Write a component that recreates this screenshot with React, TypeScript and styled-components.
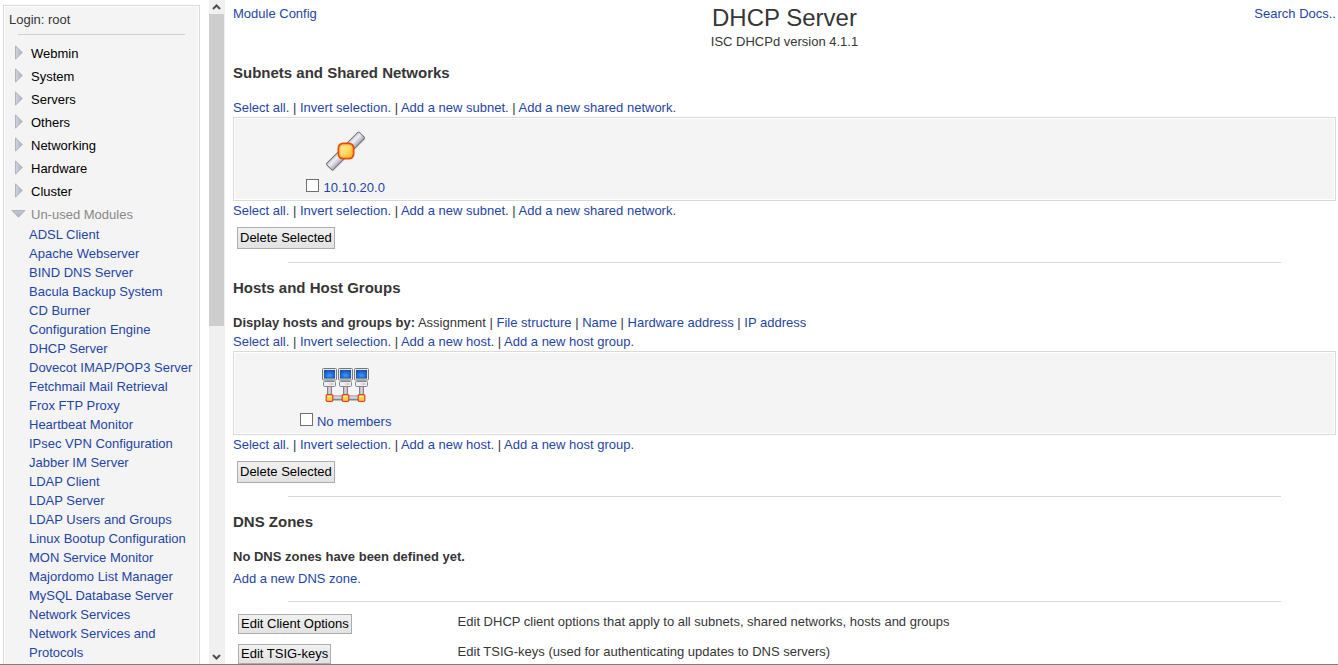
import React from "react";
import styled, { createGlobalStyle } from "styled-components";

const LINE = "#d9d9d9";
const PANEL = "#f4f4f4";
const LINK = "#1f45a5";
const TEXT = "#363636";

const GlobalStyle = createGlobalStyle`
  *, *::before, *::after { box-sizing: border-box; }
  body {
    margin: 0;
    background: #ffffff;
    color: ${TEXT};
    font-family: "Liberation Sans", Arial, sans-serif;
    font-size: 13px;
    line-height: 19px;
    overflow: hidden;
  }
`;

const Frames = styled.div`
  display: flex;
  height: 100vh;
  border-bottom: 1px solid #7d7d7d;
`;

const MenuFrame = styled.aside`
  display: flex;
  flex: none;
  width: 225px;
  overflow: hidden;
`;

const MenuScroll = styled.div`
  flex: 1;
  padding: 5px 9px 0 3px;
  overflow: hidden;
`;

const MenuBox = styled.nav`
  border: 1px solid ${LINE};
  background: ${PANEL};
  box-shadow: inset 0 0 0 1px #ffffff;
  padding: 4px 5px;
  min-height: 100%;
`;

const Login = styled.div``;

const MenuRule = styled.hr`
  border: 0;
  height: 1px;
  margin: 5px 9px 7px 9px;
  background: #d0d0d0;
`;

const Category = styled.button<{ $open?: boolean }>`
  display: flex;
  align-items: center;
  width: 100%;
  height: 23px;
  padding: 0;
  border: 0;
  background: none;
  font: inherit;
  text-align: left;
  color: ${(p) => (p.$open ? "#888888" : "#000000")};
`;

const ArrowSlot = styled.span`
  display: flex;
  justify-content: center;
  flex: none;
  width: 22px;
  padding: 0 3px 2px 0;
`;

const ModuleList = styled.ul`
  list-style: none;
  margin: -1px 0 0;
  padding: 0 0 0 20px;
`;

const Link = styled.a`
  color: ${LINK};
  text-decoration: none;
`;

const Track = styled.div`
  display: flex;
  flex-direction: column;
  flex: none;
  width: 16px;
  background: #f0f0f0;
`;

const TrackArrow = styled.button`
  display: flex;
  align-items: center;
  justify-content: center;
  height: 14px;
  padding: 0 1px 0 0;
  border: 0;
  background: none;
`;

const TrackRun = styled.div`
  flex: 1;
  padding-right: 1px;
`;

const Thumb = styled.div`
  height: 49%;
  background: #cdcdcd;
`;

const Main = styled.main`
  flex: 1;
  min-width: 0;
  overflow: hidden;
  padding: 4px 2px 0 8px;
`;

const Header = styled.header`
  display: grid;
  grid-template-columns: 15fr 70fr 15fr;
  margin-bottom: 10px;
`;

const TitleBlock = styled.div`
  text-align: center;
`;

const Title = styled.h1`
  margin: 0;
  font-size: 24px;
  font-weight: 400;
  line-height: 28px;
`;

const HeaderRight = styled.div`
  text-align: right;
`;

const Heading = styled.h2`
  margin: 0 0 13px;
  font-size: 15px;
  font-weight: 700;
  line-height: 24px;
`;

const Row = styled.div<{ $gap?: boolean }>`
  margin-top: ${(p) => (p.$gap ? "3px" : "0")};
  white-space: nowrap;
`;

const Panel = styled.div`
  display: grid;
  grid-template-columns: repeat(5, 1fr);
  min-height: 84px;
  padding: 9px 2px 2px;
  border: 1px solid ${LINE};
  background: ${PANEL};
  box-shadow: inset 0 0 0 1px #ffffff;
`;

const Item = styled.div`
  display: flex;
  flex-direction: column;
  align-items: center;
`;

const ItemLabel = styled.div`
  display: flex;
  gap: 4px;
  margin-top: 3px;
`;

const Check = styled.input`
  appearance: none;
  width: 13px;
  height: 13px;
  margin: 1px 0 0;
  border: 1px solid #707070;
  background: #ffffff;
`;

const Button = styled.button<{ $tall?: boolean }>`
  display: block;
  height: ${(p) => (p.$tall ? "22px" : "20px")};
  margin: ${(p) => (p.$tall ? "7px 0 0 4px" : "0")};
  padding: 0 2px;
  border: 1px solid #adadad;
  background: linear-gradient(#f1f1f1, #e2e2e2);
  color: #000000;
  font: inherit;
  line-height: 18px;
  white-space: nowrap;
`;

const Rule = styled.hr`
  width: 90%;
  height: 1px;
  margin: 13px auto;
  border: 0;
  background: ${LINE};
`;

const Options = styled.table`
  width: 100%;
  margin-top: -6px;
  border-collapse: collapse;
  table-layout: fixed;

  td {
    height: 30px;
    padding: 3px 0 0 4px;
    vertical-align: top;
  }
  td:first-child {
    width: 20%;
    padding: 5px 0 0 5px;
  }
`;

const ClosedArrow = () => (
  <svg width="8" height="15" viewBox="0 0 8 15" aria-hidden="true">
    <defs>
      <linearGradient id="closed" x1="0" y1="0" x2="1" y2="0">
        <stop offset="0" stopColor="#d3d5de" />
        <stop offset="1" stopColor="#adb1c1" />
      </linearGradient>
    </defs>
    <path d="M0.5 0.8 L7.2 7.5 L0.5 14.2 Z" fill="url(#closed)" stroke="#a3a7b8" strokeWidth="0.8" />
  </svg>
);

const OpenArrow = () => (
  <svg width="15" height="8" viewBox="0 0 15 8" aria-hidden="true">
    <defs>
      <linearGradient id="open" x1="0" y1="0" x2="0" y2="1">
        <stop offset="0" stopColor="#c6c9d4" />
        <stop offset="1" stopColor="#adb1c1" />
      </linearGradient>
    </defs>
    <path d="M1 0.5 L14 0.5 L7.5 7.2 Z" fill="url(#open)" stroke="#a3a7b8" strokeWidth="0.8" />
  </svg>
);

const Chevron = ({ down }: { down?: boolean }) => (
  <svg width="9" height="6" viewBox="0 0 9 6" aria-hidden="true">
    <path d={down ? "M1 1 L4.5 4.5 L8 1" : "M1 5 L4.5 1.5 L8 5"} fill="none" stroke="#505050" strokeWidth="2" />
  </svg>
);

const SubnetIcon = () => (
  <svg width="48" height="48" viewBox="0 0 48 48" aria-hidden="true">
    <defs>
      <linearGradient id="pipe" x1="0" y1="0" x2="0" y2="1">
        <stop offset="0" stopColor="#c4c4cc" />
        <stop offset="0.35" stopColor="#f0f0f8" />
        <stop offset="1" stopColor="#a8a8b4" />
      </linearGradient>
      <linearGradient id="hub" x1="0" y1="0" x2="1" y2="1">
        <stop offset="0" stopColor="#fff3b0" />
        <stop offset="0.5" stopColor="#ffdb70" />
        <stop offset="1" stopColor="#ffae10" />
      </linearGradient>
    </defs>
    <g transform="rotate(-45 24.5 25)" opacity="0.2">
      <rect x="1" y="20.5" width="46" height="9" rx="1" fill="#555555" />
    </g>
    <g transform="rotate(-45 23.5 24)">
      <rect x="0.5" y="19.5" width="46" height="9" rx="1" fill="url(#pipe)" stroke="#73737b" />
    </g>
    <rect x="16.5" y="16.5" width="15" height="15" rx="4.5" fill="url(#hub)" stroke="#e84a10" strokeWidth="2" />
    <rect x="18" y="18" width="12" height="12" rx="3" fill="none" stroke="#ffbe2e" />
  </svg>
);

const HostsIcon = () => (
  <svg width="48" height="48" viewBox="0 0 48 48" aria-hidden="true">
    <defs>
      <radialGradient id="screen" cx="0.5" cy="0.65" r="0.7">
        <stop offset="0" stopColor="#369cf8" />
        <stop offset="1" stopColor="#0a48bc" />
      </radialGradient>
    </defs>
    <path d="M7 37 H39" stroke="#84848c" strokeWidth="5" />
    <path d="M7 36.5 H39" stroke="#d4d4dc" strokeWidth="2.5" />
    {[0, 16, 32].map((x) => (
      <g key={x} transform={`translate(${x} 0)`}>
        <path d="M7.5 25 V34" stroke="#84848c" strokeWidth="5" />
        <path d="M7.5 25 V34" stroke="#d4d4dc" strokeWidth="2.5" />
        <rect x="0.5" y="7.5" width="14" height="11.5" rx="1" fill="#f0f0e8" stroke="#77777b" />
        <rect x="2.2" y="9.2" width="10.6" height="8" fill="url(#screen)" stroke="#0b3478" strokeWidth="0.5" />
        <path d="M3.5 19.5 H11.5" stroke="#a0a0a0" />
        <rect x="1.5" y="20.5" width="12" height="5" rx="1" fill="#ededed" stroke="#85858a" />
        <path d="M7.5 23 H11.5" stroke="#b5b5b5" />
        <rect x="4.2" y="33.7" width="6.6" height="6.6" rx="1" fill="#ffcf50" stroke="#d9481c" strokeWidth="1.2" />
        <path d="M5.5 35.5 H8.5" stroke="#fff0a8" />
      </g>
    ))}
  </svg>
);

const categories = ["Webmin", "System", "Servers", "Others", "Networking", "Hardware", "Cluster"];

const modules = [
  "ADSL Client",
  "Apache Webserver",
  "BIND DNS Server",
  "Bacula Backup System",
  "CD Burner",
  "Configuration Engine",
  "DHCP Server",
  "Dovecot IMAP/POP3 Server",
  "Fetchmail Mail Retrieval",
  "Frox FTP Proxy",
  "Heartbeat Monitor",
  "IPsec VPN Configuration",
  "Jabber IM Server",
  "LDAP Client",
  "LDAP Server",
  "LDAP Users and Groups",
  "Linux Bootup Configuration",
  "MON Service Monitor",
  "Majordomo List Manager",
  "MySQL Database Server",
  "Network Services",
  "Network Services and Protocols",
];

const LinkRow = ({ links }: { links: string[] }) => (
  <Row>
    {links.map((text, i) => (
      <React.Fragment key={text}>
        {i > 0 && " | "}
        <Link href="#">{text}</Link>
      </React.Fragment>
    ))}
  </Row>
);

const Selection = ({
  id,
  links,
  label,
  icon,
}: {
  id: string;
  links: string[];
  label: string;
  icon: React.ReactNode;
}) => (
  <>
    <LinkRow links={links} />
    <Panel>
      <Item>
        {icon}
        <ItemLabel>
          <Check type="checkbox" aria-labelledby={id} />
          <Link id={id} href="#">
            {label}
          </Link>
        </ItemLabel>
      </Item>
    </Panel>
    <LinkRow links={links} />
    <Button $tall type="button">
      Delete Selected
    </Button>
  </>
);

const subnetLinks = ["Select all.", "Invert selection.", "Add a new subnet.", "Add a new shared network."];
const hostLinks = ["Select all.", "Invert selection.", "Add a new host.", "Add a new host group."];
const displayModes = ["File structure", "Name", "Hardware address", "IP address"];
const options = [
  ["Edit Client Options", "Edit DHCP client options that apply to all subnets, shared networks, hosts and groups"],
  ["Edit TSIG-keys", "Edit TSIG-keys (used for authenticating updates to DNS servers)"],
];

export default function App() {
  return (
    <>
      <GlobalStyle />
      <Frames>
        <MenuFrame>
          <MenuScroll>
            <MenuBox>
              <Login>Login: root</Login>
              <MenuRule />
              {categories.map((name) => (
                <Category key={name} type="button">
                  <ArrowSlot>
                    <ClosedArrow />
                  </ArrowSlot>
                  {name}
                </Category>
              ))}
              <Category type="button" $open>
                <ArrowSlot>
                  <OpenArrow />
                </ArrowSlot>
                Un-used Modules
              </Category>
              <ModuleList>
                {modules.map((name) => (
                  <li key={name}>
                    <Link href="#">{name}</Link>
                  </li>
                ))}
              </ModuleList>
            </MenuBox>
          </MenuScroll>
          <Track>
            <TrackArrow type="button" aria-label="Scroll up">
              <Chevron />
            </TrackArrow>
            <TrackRun>
              <Thumb />
            </TrackRun>
            <TrackArrow type="button" aria-label="Scroll down">
              <Chevron down />
            </TrackArrow>
          </Track>
        </MenuFrame>
        <Main>
          <Header>
            <div>
              <Link href="#">Module Config</Link>
            </div>
            <TitleBlock>
              <Title>DHCP Server</Title>
              <div>ISC DHCPd version 4.1.1</div>
            </TitleBlock>
            <HeaderRight>
              <Link href="#">Search Docs..</Link>
            </HeaderRight>
          </Header>

          <Heading>Subnets and Shared Networks</Heading>
          <Selection id="subnet" links={subnetLinks} label="10.10.20.0" icon={<SubnetIcon />} />
          <Rule />

          <Heading>Hosts and Host Groups</Heading>
          <Row>
            <b>Display hosts and groups by:</b> Assignment
            {displayModes.map((mode) => (
              <React.Fragment key={mode}>
                {" | "}
                <Link href="#">{mode}</Link>
              </React.Fragment>
            ))}
          </Row>
          <Selection id="host" links={hostLinks} label="No members" icon={<HostsIcon />} />
          <Rule />

          <Heading>DNS Zones</Heading>
          <Row>
            <b>No DNS zones have been defined yet.</b>
          </Row>
          <Row $gap>
            <Link href="#">Add a new DNS zone.</Link>
          </Row>
          <Rule />

          <Options>
            <tbody>
              {options.map(([name, description]) => (
                <tr key={name}>
                  <td>
                    <Button type="button">{name}</Button>
                  </td>
                  <td>{description}</td>
                </tr>
              ))}
            </tbody>
          </Options>
        </Main>
      </Frames>
    </>
  );
}
